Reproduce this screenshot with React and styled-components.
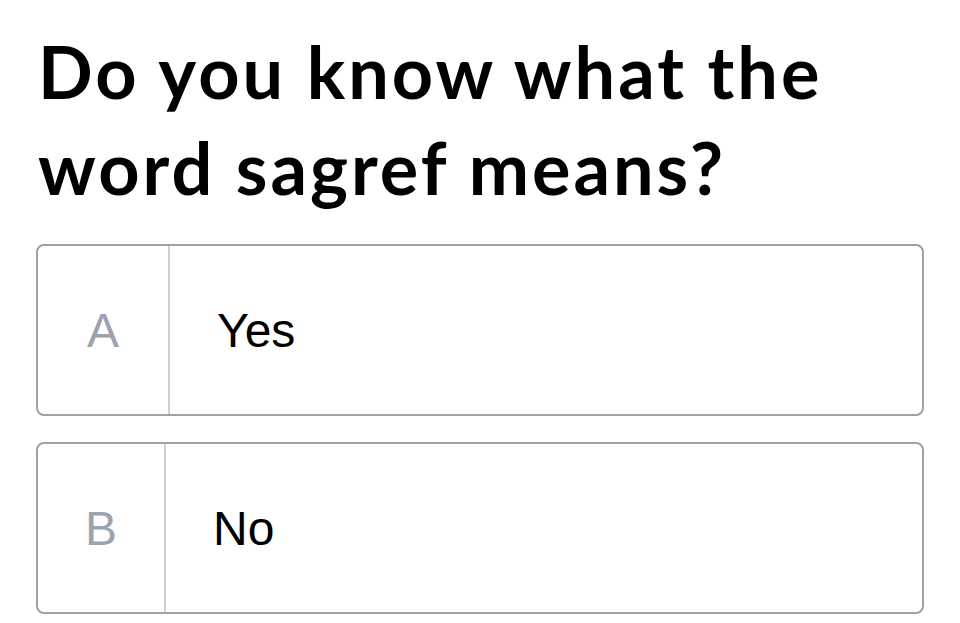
import React from 'react';
import styled, { createGlobalStyle } from 'styled-components';

const GlobalStyle = createGlobalStyle`
	* {
		box-sizing: border-box;
	}
	body {
		margin: 0;
		background: #ffffff;
	}
`;

const Page = styled.main`
	padding: 23px 36px 0;
`;

const Question = styled.h1`
	margin: 0 0 29px;
	padding-left: 2px;
	font-family: 'Lato', sans-serif;
	font-weight: 700;
	font-size: 72px;
	line-height: 96px;
	letter-spacing: 3px;
	color: #000000;
`;

const Options = styled.ul`
	list-style: none;
	margin: 0;
	padding: 0;
	display: flex;
	flex-direction: column;
	gap: 26px;
`;

const Option = styled.li`
	display: flex;
	align-items: stretch;
	height: 172px;
	border: 2px solid #9ea2a8;
	border-radius: 8px;
	font-family: 'Liberation Sans', Arial, sans-serif;
	font-size: 48px;
`;

const Letter = styled.span`
	display: flex;
	align-items: center;
	padding: 0 ${(p) => p.$pad}px;
	color: #9ca3af;
	border-right: 2px solid #cfcfcf;
`;

const Answer = styled.span`
	display: flex;
	align-items: center;
	padding-left: 47px;
	color: #000000;
`;

const options = [
	{ id: 'A', text: 'Yes', pad: 49 },
	{ id: 'B', text: 'No', pad: 47 },
];

const App = () => {
	return (
		<>
			<GlobalStyle />
			<Page>
				<Question>Do you know what the word sagref means?</Question>
				<Options>
					{options.map((option) => (
						<Option key={option.id}>
							<Letter $pad={option.pad}>{option.id}</Letter>
							<Answer>{option.text}</Answer>
						</Option>
					))}
				</Options>
			</Page>
		</>
	);
};

export default App;
